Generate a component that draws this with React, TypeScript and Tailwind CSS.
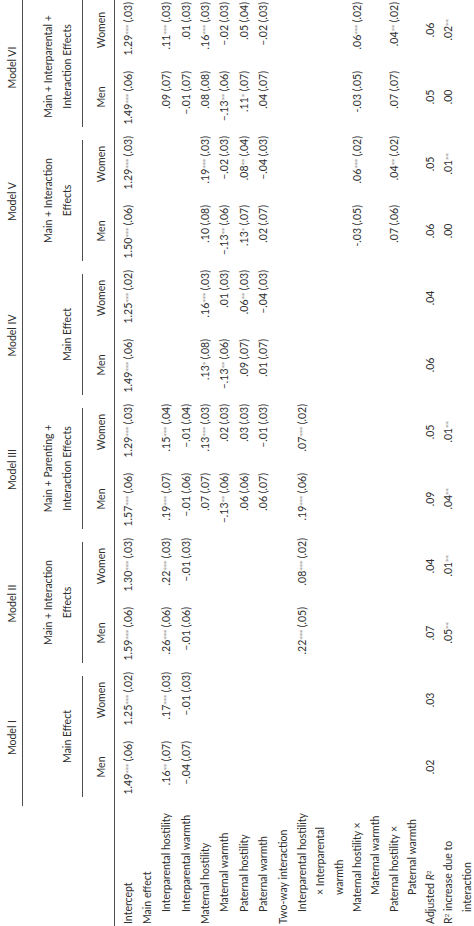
import clsx from "clsx";

type Row = {
  label: React.ReactNode;
  indent?: 0 | 1 | 2;
  vals?: string[];
  center?: boolean;
  tight?: boolean;
};

const models = ["I", "II", "III", "IV", "V", "VI"];

const subheads: string[][] = [
  ["Main Effect"],
  ["Main + Interaction", "Effects"],
  ["Main + Parenting +", "Interaction Effects"],
  ["Main Effect"],
  ["Main + Interaction", "Effects"],
  ["Main + Interparental +", "Interaction Effects"],
];

const e = "";

const rows: Row[] = [
  {
    label: "Intercept",
    vals: [
      "1.49*** (.06)", "1.25*** (.02)", "1.59*** (.06)", "1.30*** (.03)",
      "1.57*** (.06)", "1.29*** (.03)", "1.49*** (.06)", "1.25*** (.02)",
      "1.50*** (.06)", "1.29*** (.03)", "1.49*** (.06)", "1.29*** (.03)",
    ],
  },
  { label: "Main effect" },
  {
    label: "Interparental hostility",
    indent: 1,
    vals: [".16** (.07)", ".17*** (.03)", ".26*** (.06)", ".22*** (.03)", ".19*** (.07)", ".15*** (.04)", e, e, e, e, ".09 (.07)", ".11*** (.03)"],
  },
  {
    label: "Interparental warmth",
    indent: 1,
    vals: ["–.04 (.07)", "–.01 (.03)", "–.01 (.06)", "–.01 (.03)", "–.01 (.06)", "–.01 (.04)", e, e, e, e, "–.01 (.07)", ".01 (.03)"],
  },
  {
    label: "Maternal hostility",
    vals: [e, e, e, e, ".07 (.07)", ".13*** (.03)", ".13* (.08)", ".16*** (.03)", ".10 (.08)", ".19*** (.03)", ".08 (.08)", ".16*** (.03)"],
  },
  {
    label: "Maternal warmth",
    indent: 1,
    vals: [e, e, e, e, "–.13** (.06)", ".02 (.03)", "–.13** (.06)", ".01 (.03)", "–.13** (.06)", "–.02 (.03)", "–.13** (.06)", "–.02 (.03)"],
  },
  {
    label: "Paternal hostility",
    indent: 1,
    vals: [e, e, e, e, ".06 (.06)", ".03 (.03)", ".09 (.07)", ".06** (.03)", ".13* (.07)", ".08** (.04)", ".11* (.07)", ".05 (.04)"],
  },
  {
    label: "Paternal warmth",
    indent: 1,
    vals: [e, e, e, e, ".06 (.07)", "–.01 (.03)", ".01 (.07)", "–.04 (.03)", ".02 (.07)", "–.04 (.03)", ".04 (.07)", "–.02 (.03)"],
  },
  { label: "Two-way interaction" },
  {
    label: "Interparental hostility",
    indent: 1,
    tight: true,
    vals: [e, e, ".22*** (.05)", ".08*** (.02)", ".19*** (.06)", ".07*** (.02)", e, e, e, e, e, e],
  },
  { label: "× Interparental", indent: 2, tight: true },
  { label: "warmth", indent: 2, tight: true },
  {
    label: "Maternal hostility ×",
    indent: 1,
    tight: true,
    vals: [e, e, e, e, e, e, e, e, "-.03 (.05)", ".06*** (.02)", "-.03 (.05)", ".06*** (.02)"],
  },
  { label: "Maternal warmth", indent: 2, tight: true },
  {
    label: "Paternal hostility ×",
    indent: 1,
    tight: true,
    vals: [e, e, e, e, e, e, e, e, ".07 (.06)", ".04** (.02)", ".07 (.07)", ".04** (.02)"],
  },
  { label: "Paternal warmth", indent: 2, tight: true },
  {
    label: (
      <>
        Adjusted <i>R</i>
        <sup className="text-[6.5px]">2</sup>
      </>
    ),
    tight: true,
    center: true,
    vals: [".02", ".03", ".07", ".04", ".09", ".05", ".06", ".04", ".06", ".05", ".05", ".06"],
  },
  {
    label: (
      <>
        R<sup className="text-[6.5px]">2</sup> increase due to
      </>
    ),
    tight: true,
    center: true,
    vals: [e, e, ".05**", ".01**", ".04**", ".01**", e, e, ".00", ".01**", ".00", ".02**"],
  },
  { label: "interaction", indent: 1, tight: true },
];

const Value: React.FC<{ v: string }> = ({ v }) => {
  const m = v.match(/^([^*\s]+)(\*+)?(?:\s(.+))?$/);
  if (!m) return <>{v}</>;
  const [, coef, stars, se] = m;
  return (
    <>
      {coef}
      {stars && (
        <span className="align-[1px] font-['DejaVu_Sans',sans-serif] text-[7.5px] tracking-[-0.5px] text-[#999]">
          {stars}
        </span>
      )}
      {se && <> {se}</>}
    </>
  );
};

const indentClass = ["pl-[2px]", "pl-[14px]", "pl-[31px]"];

export default function App() {
  return (
    <div className="relative h-[926px] w-[474px] overflow-hidden bg-white">
      <div className="h-[474px] w-[932px] origin-top-left -rotate-90 translate-y-[926px] font-[Lato,'Open_Sans',sans-serif] text-[10.5px] text-[#2e2e2e]">
        <div className="grid grid-cols-[128px_repeat(6,62px_72px)]">
          {/* model labels */}
          <div />
          {models.map((m, i) => (
            <div
              key={m}
              className={clsx(
                "col-span-2 h-[23px] border-b-[1.5px] border-[#4d4d4d] pt-[3px] pr-[13px] text-center leading-[18px]",
                i === 0 && "-ml-[8px] pl-[8px]",
              )}
            >
              Model {m}
            </div>
          ))}

          {/* group headers */}
          <div />
          {subheads.map((lines, i) => (
            <div
              key={i}
              className={clsx(
                "col-span-2 ml-[1px] flex h-[59.5px] flex-col justify-end border-b-[1.5px] border-[#4d4d4d] pb-[4.5px] text-center leading-[19px]",
                i === 5 ? "mr-0 pr-[12px]" : "mr-[12px]",
              )}
            >
              {lines.map((l) => (
                <div key={l} className="whitespace-nowrap">
                  {l}
                </div>
              ))}
            </div>
          ))}

          {/* men / women */}
          <div className="h-[32px] border-b-[1.5px] border-[#4d4d4d]" />
          {models.map((m) => (
            <div key={m} className="contents">
              <div className="h-[32px] border-b-[1.5px] border-[#4d4d4d] pt-[9px] text-center leading-[19px]">
                Men
              </div>
              <div className="h-[32px] border-b-[1.5px] border-[#4d4d4d] pt-[9px] text-center leading-[19px]">
                Women
              </div>
            </div>
          ))}

          <div className="col-span-13 h-[4px]" />

          {/* body */}
          {rows.map((r, ri) => {
            const h = r.tight
              ? "h-[18.3px] leading-[18.3px]"
              : "h-[19.4px] leading-[19.4px]";
            return (
              <div key={ri} className="contents">
                <div
                  className={clsx(
                    "whitespace-nowrap",
                    h,
                    indentClass[r.indent ?? 0],
                  )}
                >
                  {r.label}
                </div>
                {Array.from({ length: 12 }).map((_, ci) => {
                  const v = r.vals?.[ci] ?? "";
                  const women = ci % 2 === 1;
                  return (
                    <div
                      key={ci}
                      className={clsx(
                        "whitespace-nowrap",
                        h,
                        r.center
                          ? "text-center"
                          : women
                            ? "pr-[8px] text-right"
                            : "pr-[5px] text-right",
                      )}
                    >
                      {v && <Value v={v} />}
                    </div>
                  );
                })}
              </div>
            );
          })}
        </div>
      </div>
    </div>
  );
}
